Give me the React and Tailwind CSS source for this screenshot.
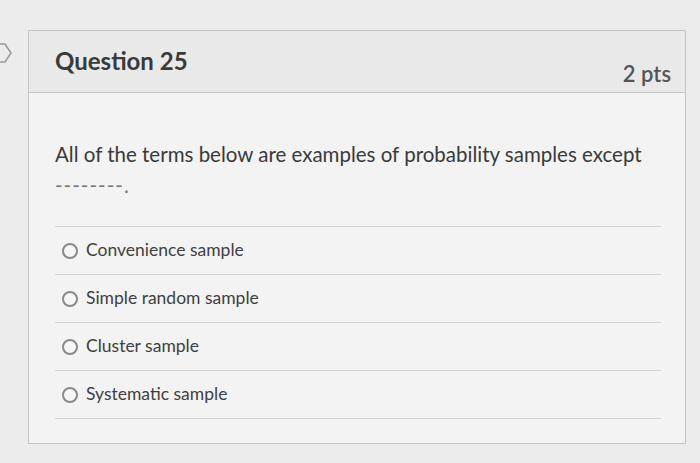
import React from 'react';

const options = ['Convenience sample', 'Simple random sample', 'Cluster sample', 'Systematic sample'];

function Flag() {
  return (
    <svg width="18" height="22" viewBox="0 0 18 22" className="mt-[42px] -ml-[4px]">
      <path d="M0 2 H9 L15 11 L9 20 H0" fill="none" stroke="#9a9a9a" strokeWidth="1.6" />
    </svg>
  );
}

function Option({ label }) {
  return (
    <div className="flex items-center h-[48px] border-t border-[#d6d6d6]">
      <span className="w-[16px] h-[16px] rounded-full border-2 border-[#8a8a8a] bg-[#f6f6f6] ml-[7px]" />
      <span className="ml-[8px] text-[17.5px] text-[#3f3f3f]">{label}</span>
    </div>
  );
}

export default function App() {
  return (
    <div
      className="w-[700px] h-[463px] bg-[#ececec] overflow-hidden flex"
      style={{ fontFamily: 'Lato, "Open Sans", sans-serif' }}
    >
      <div className="w-[28px] shrink-0">
        <Flag />
      </div>
      <div className="mt-[30px] w-[658px] h-[414px] border border-[#c4c4c4] bg-[#f3f3f3] flex flex-col">
        <div className="h-[62px] bg-[#e9e9e9] border-b border-[#c4c4c4] flex justify-between pl-[26px] pr-[14px]">
          <h2 className="text-[24px] font-bold text-[#3a3a3a] pt-[12px]">Question 25</h2>
          <span className="text-[22px] font-semibold text-[#555] self-end pb-[2px]">2 pts</span>
        </div>
        <div className="pl-[26px] pr-[24px] pt-[46px]">
          <p className="text-[20.5px] leading-[31px] text-[#3a3a3a]">
            All of the terms below are examples of probability samples except
            <br />
            <span className="text-[#777] tracking-[1px]">--------.</span>
          </p>
          <div className="mt-[25px]">
            {options.map(o => (
              <Option key={o} label={o} />
            ))}
            <div className="border-t border-[#d6d6d6]" />
          </div>
        </div>
      </div>
    </div>
  );
}
